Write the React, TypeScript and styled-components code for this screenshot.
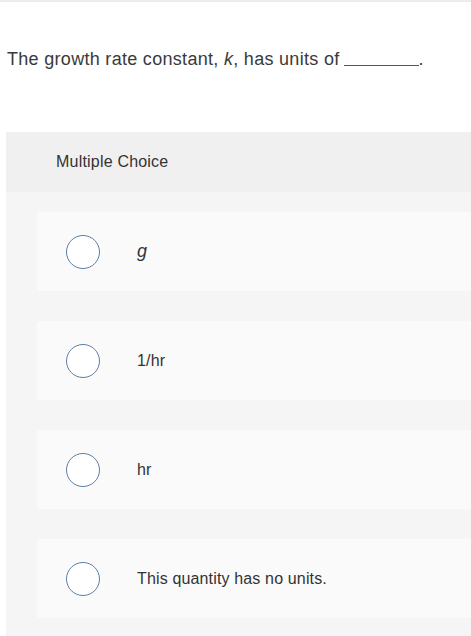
import React from "react";
import styled, { createGlobalStyle } from "styled-components";

const GlobalStyle = createGlobalStyle`
  html, body {
    margin: 0;
    padding: 0;
    background: #ffffff;
  }
  body {
    font-family: "Liberation Sans", Arial, sans-serif;
    color: #333333;
  }
`;

const Page = styled.div`
  width: 471px;
  height: 636px;
  overflow: hidden;
  border-top: 2px solid #ececec;
  box-sizing: border-box;
`;

const Question = styled.div`
  padding: 46px 0 0 7px;
  height: 130px;
  box-sizing: border-box;
  font-size: 18px;
  letter-spacing: 0.3px;
  line-height: 22px;
  color: #3a3a3a;
  white-space: nowrap;
`;

const Blank = styled.span`
  display: inline-block;
  width: 75px;
  margin-left: 4px;
  border-bottom: 1px solid #555555;
  vertical-align: -1px;
`;

const Panel = styled.section`
  margin-left: 6px;
`;

const PanelHeader = styled.div`
  height: 60px;
  display: flex;
  align-items: center;
  padding-left: 50px;
  background: #f0f0f0;
  font-size: 16px;
  letter-spacing: 0.2px;
  color: #333333;
`;

const PanelBody = styled.div`
  background: #f5f5f5;
  padding: 20px 0 19px 31px;
  display: flex;
  flex-direction: column;
  gap: 30px;
`;

const Option = styled.label`
  height: 79px;
  display: flex;
  align-items: center;
  padding-left: 29px;
  background: #fafafa;
  border-radius: 2px 0 0 2px;
  cursor: pointer;
`;

const Radio = styled.span`
  width: 34px;
  height: 34px;
  box-sizing: border-box;
  border: 1.5px solid #5b7ea8;
  border-radius: 50%;
  background: #ffffff;
  flex-shrink: 0;
`;

const OptionText = styled.span<{ $italic?: boolean }>`
  margin-left: 37px;
  font-size: ${(p) => (p.$italic ? "18px" : "16px")};
  letter-spacing: 0.15px;
  color: #333333;
  font-style: ${(p) => (p.$italic ? "italic" : "normal")};
`;

const options = [
  { text: "g", italic: true },
  { text: "1/hr" },
  { text: "hr" },
  { text: "This quantity has no units." },
];

const App = () => {
  return (
    <Page>
      <GlobalStyle />
      <Question>
        The growth rate constant, <i>k</i>, has units of
        <Blank />.
      </Question>
      <Panel>
        <PanelHeader>Multiple Choice</PanelHeader>
        <PanelBody>
          {options.map((o) => (
            <Option key={o.text}>
              <Radio />
              <OptionText $italic={o.italic}>{o.text}</OptionText>
            </Option>
          ))}
        </PanelBody>
      </Panel>
    </Page>
  );
};

export default App;
